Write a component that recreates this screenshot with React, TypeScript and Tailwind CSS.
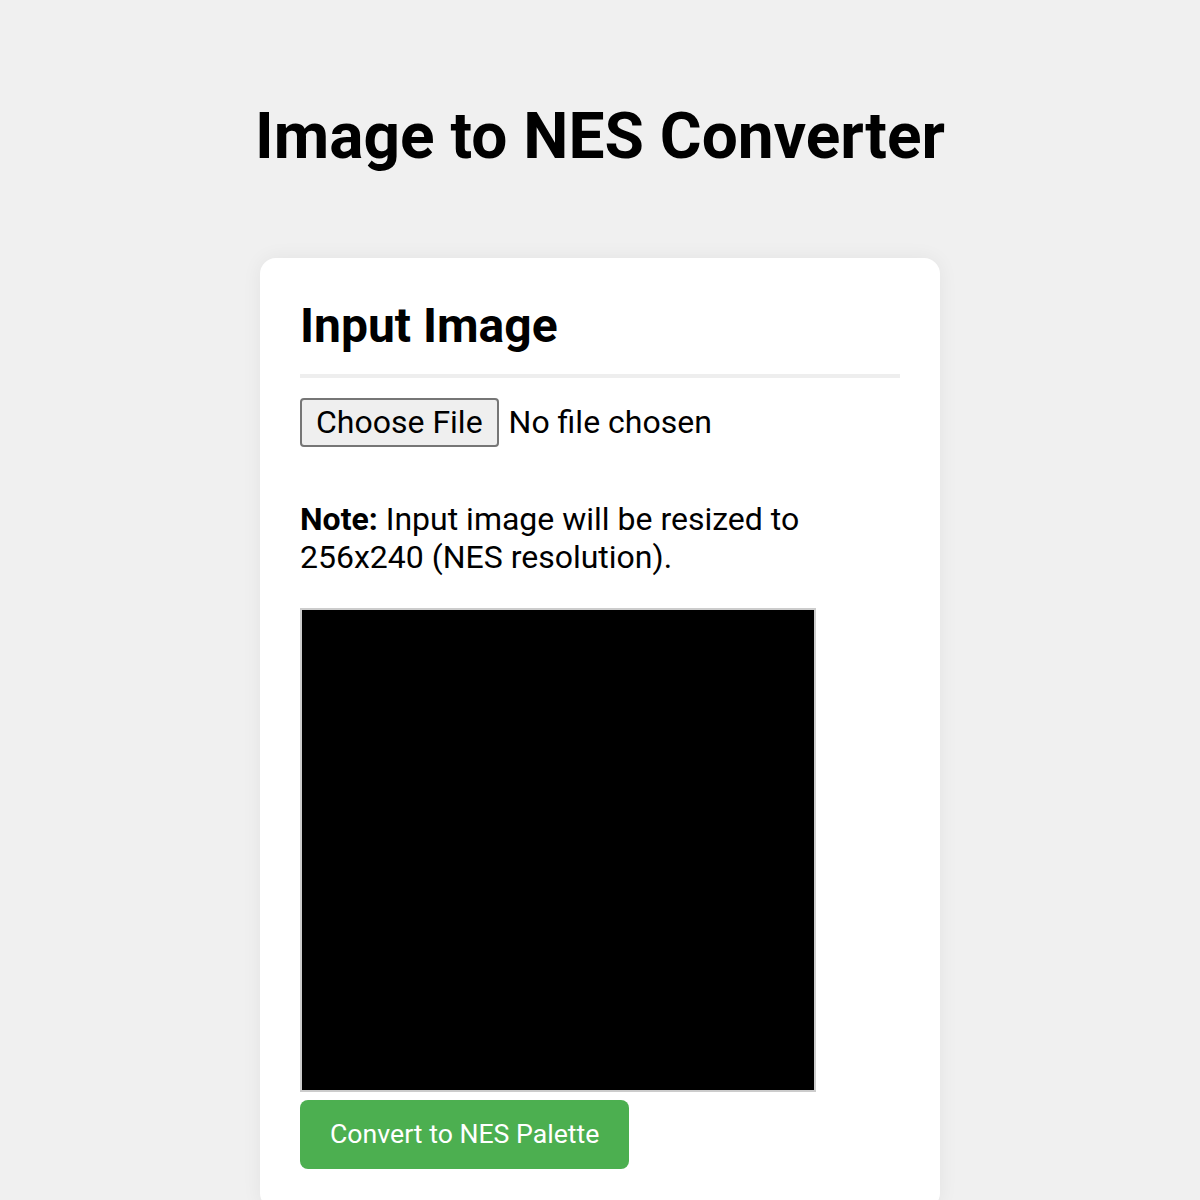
export default function App() {
  return (
    <div
      className="min-h-[1200px] bg-[#f0f0f0] text-black"
      style={{ fontFamily: 'Roboto, "Liberation Sans", sans-serif' }}
    >
      <h1 className="pt-[99px] text-center text-[64px] font-bold leading-[75px]">
        Image to NES Converter
      </h1>

      <div className="mx-auto mt-[84px] w-[680px] rounded-[16px] bg-white px-[40px] pt-[40px] pb-[40px] shadow-[0_0_20px_rgba(0,0,0,0.06)]">
        <h2 className="border-b-4 border-[#eeeeee] pb-[20px] text-[48px] font-bold leading-[56px]">
          Input Image
        </h2>

        <div className="mt-[20px] flex items-center text-[32px] leading-[37px]">
          <span className="rounded-[4px] border-2 border-[#767676] bg-[#efefef] px-[14px] py-[4px]">
            Choose File
          </span>
          <span className="ml-[10px]">No file chosen</span>
        </div>

        <p className="mt-[54px] text-[32px] leading-[37.5px]">
          <b>Note:</b> Input image will be resized to 256x240 (NES resolution).
        </p>

        <div className="mt-[32px] h-[484px] w-[516px] border-2 border-[#cccccc] bg-black" />

        <button className="mt-[8px] block rounded-[8px] bg-[#4caf50] px-[30px] py-[19px] text-[26.67px] leading-[31px] text-white">
          Convert to NES Palette
        </button>
      </div>
    </div>
  );
}
